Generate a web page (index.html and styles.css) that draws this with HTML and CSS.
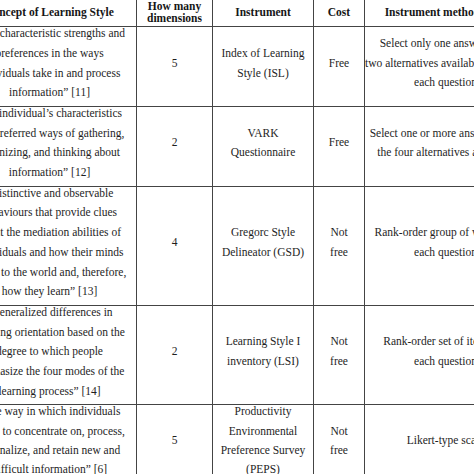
FILE: index.html
```html
<!DOCTYPE html>
<html lang="en">
<head>
<meta charset="utf-8">
<title>Learning style instruments</title>
<link rel="stylesheet" href="styles.css">
</head>
<body>
<table class="grid">
  <colgroup>
    <col class="w-concept">
    <col class="w-dim">
    <col class="w-inst">
    <col class="w-cost">
    <col class="w-method">
  </colgroup>
  <thead>
    <tr>
      <th>Concept of Learning Style</th>
      <th>How many<br>dimensions</th>
      <th>Instrument</th>
      <th>Cost</th>
      <th>Instrument methodology</th>
    </tr>
  </thead>
  <tbody>
    <tr>
      <td><div class="c">“The characteristic strengths and<br>preferences in the ways<br>individuals take in and process<br>information” [11]</div></td>
      <td><div class="c">5</div></td>
      <td><div class="c">Index of Learning<br>Style (ISL)</div></td>
      <td><div class="c">Free</div></td>
      <td><div class="c">Select only one answer from<br>two alternatives available, a or b, for<br>each question</div></td>
    </tr>
    <tr>
      <td><div class="c">“An individual’s characteristics<br>and preferred ways of gathering,<br>organizing, and thinking about<br>information” [12]</div></td>
      <td><div class="c">2</div></td>
      <td><div class="c">VARK<br>Questionnaire</div></td>
      <td><div class="c">Free</div></td>
      <td><div class="c">Select one or more answers from<br>the four alternatives available</div></td>
    </tr>
    <tr>
      <td><div class="c">“Distinctive and observable<br>behaviours that provide clues<br>about the mediation abilities of<br>individuals and how their minds<br>relate to the world and, therefore,<br>how they learn” [13]</div></td>
      <td><div class="c">4</div></td>
      <td><div class="c">Gregorc Style<br>Delineator (GSD)</div></td>
      <td><div class="c">Not<br>free</div></td>
      <td><div class="c">Rank-order group of words for<br>each question</div></td>
    </tr>
    <tr>
      <td><div class="c">“Generalized differences in<br>learning orientation based on the<br>degree to which people<br>emphasize the four modes of the<br>learning process” [14]</div></td>
      <td><div class="c">2</div></td>
      <td><div class="c">Learning Style I<br>inventory (LSI)</div></td>
      <td><div class="c">Not<br>free</div></td>
      <td><div class="c">Rank-order set of items for<br>each question</div></td>
    </tr>
    <tr class="tight">
      <td><div class="c">“The way in which individuals<br>begin to concentrate on, process,<br>internalize, and retain new and<br>difficult information” [6]</div></td>
      <td><div class="c">5</div></td>
      <td><div class="c">Productivity<br>Environmental<br>Preference Survey<br>(PEPS)</div></td>
      <td><div class="c">Not<br>free</div></td>
      <td><div class="c">Likert-type scale</div></td>
    </tr>
  </tbody>
</table>
</body>
</html>
```

FILE: styles.css
```css
html, body {
  margin: 0;
  padding: 0;
  background: #ffffff;
  overflow: hidden;
}

.grid {
  border-collapse: collapse;
  table-layout: fixed;
  width: 564px;
  margin-left: -38px;
  font-family: "Liberation Serif", "Times New Roman", serif;
  font-size: 11.5px;
  color: #1e1e1e;
}

.w-concept { width: 174px; }
.w-dim { width: 76px; }
.w-inst { width: 101px; }
.w-cost { width: 51px; }
.w-method { width: 162px; }

.grid th,
.grid td {
  border: 1px solid #444444;
  padding: 0;
  text-align: center;
  vertical-align: middle;
  white-space: nowrap;
}

.grid th {
  border-top: none;
  font-weight: bold;
  line-height: 11.8px;
  padding: 1px 0 1.5px;
  color: #161616;
}

.grid td {
  line-height: 19.7px;
  font-weight: normal;
}

.grid .tight td {
  line-height: 19.1px;
}

.c {
  margin: -3px 0 3px;
}
```
